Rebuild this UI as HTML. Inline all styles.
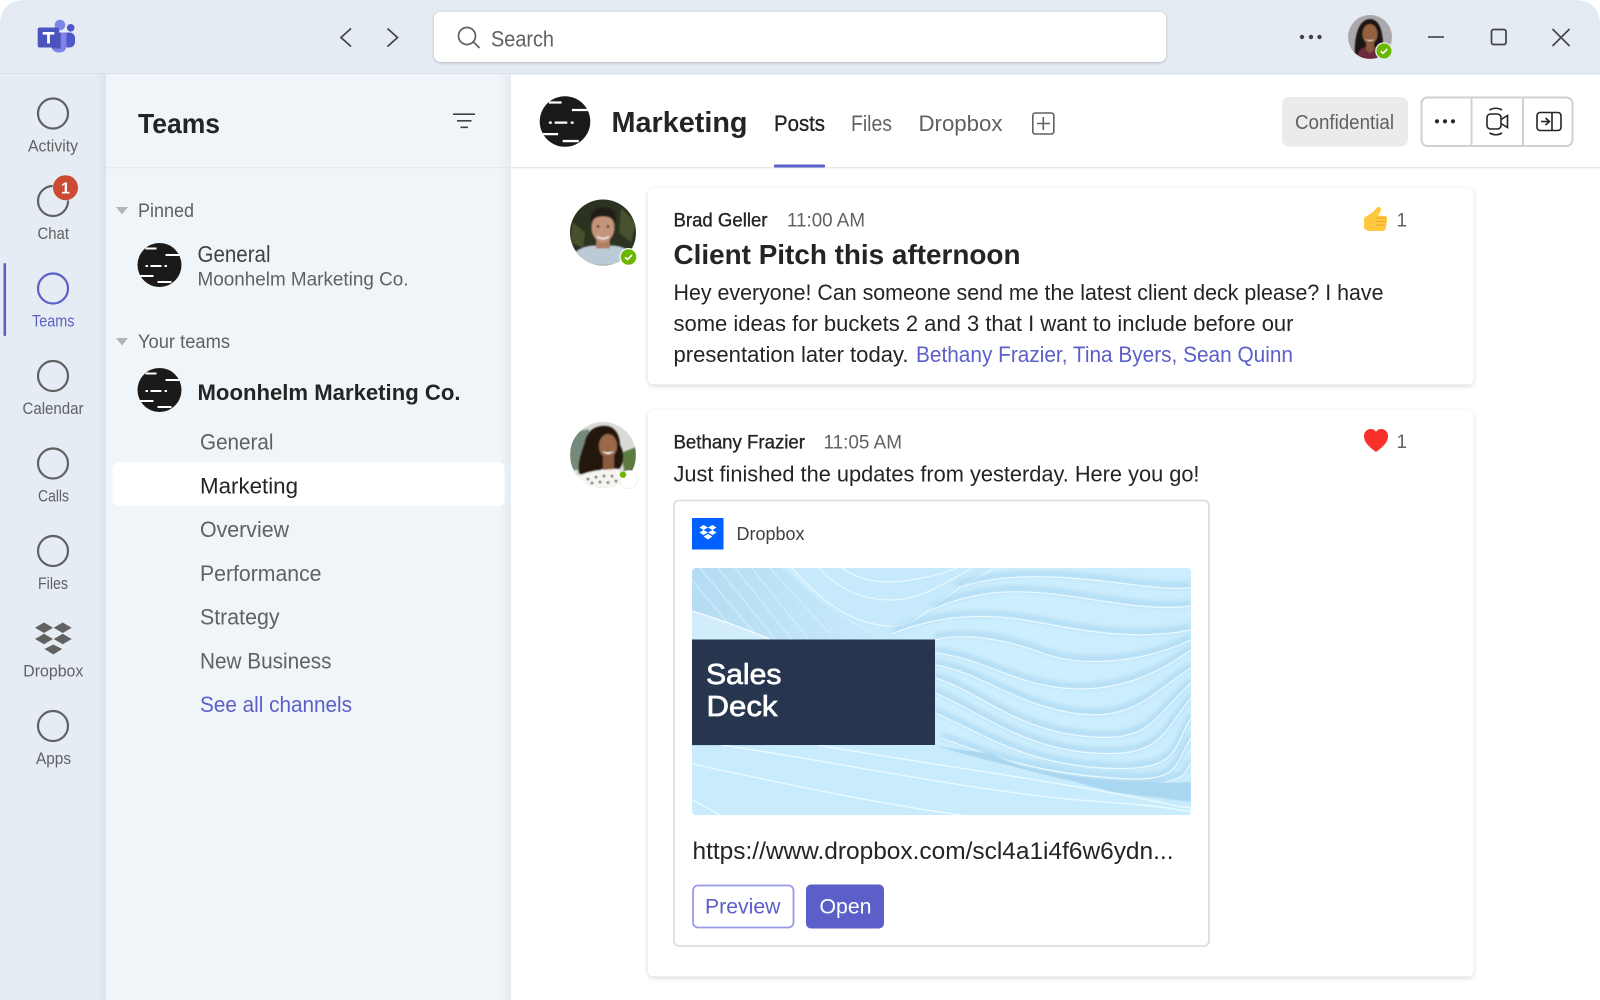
<!DOCTYPE html>
<html lang="en">
<head>
<meta charset="utf-8">
<title>Microsoft Teams - Marketing</title>
<style>
html,body{margin:0;padding:0;width:1600px;height:1000px;overflow:hidden;background:#fff}
svg{display:block}
text{font-family:"Liberation Sans",Arial,sans-serif;white-space:pre}
.r{font-size:16.5px;fill:#616161}
.ch{font-size:22px;fill:#424242}
.sub{font-size:19px;fill:#616161}
.b{font-size:22.5px;fill:#242424}
.m{stroke:#242424;stroke-width:.35px}
</style>
</head>
<body>
<svg width="1600" height="1000" viewBox="0 0 1600 1000" xmlns="http://www.w3.org/2000/svg">
<defs>
<filter id="sh" x="-5%" y="-10%" width="110%" height="120%"><feDropShadow dx="0" dy="1.5" stdDeviation="2.500" flood-color="#000" flood-opacity=".16"/></filter>
<filter id="sh2" x="-5%" y="-10%" width="110%" height="125%"><feDropShadow dx="0" dy="1" stdDeviation="1.500" flood-color="#000" flood-opacity=".22"/></filter>
<filter id="bl"><feGaussianBlur stdDeviation=".8"/></filter>
<filter id="bl2"><feGaussianBlur stdDeviation=".5"/></filter>
<filter id="bl3" x="-10%" y="-10%" width="120%" height="120%"><feGaussianBlur stdDeviation="2.200"/></filter>
<filter id="bl4"><feGaussianBlur stdDeviation=".35"/></filter>
<linearGradient id="railsh" x1="0" x2="1"><stop offset="0" stop-color="#e5ecf4"/><stop offset="1" stop-color="#dce3ea"/></linearGradient>
<linearGradient id="panelsh" x1="0" x2="1"><stop offset="0" stop-color="#f0f5f9"/><stop offset="1" stop-color="#e6ebef"/></linearGradient>
<linearGradient id="wbase" x1="0" y1="0" x2="1" y2="0"><stop offset="0" stop-color="#b5dcf3"/><stop offset=".28" stop-color="#c3e6f9"/><stop offset=".5" stop-color="#cdeefd"/><stop offset="1" stop-color="#cbedfd"/></linearGradient>
<clipPath id="wclip"><rect x="0" y="0" width="499" height="247" rx="4"/></clipPath>
<clipPath id="c22"><circle cx="0" cy="0" r="22"/></clipPath>
<clipPath id="c33"><circle cx="0" cy="0" r="33"/></clipPath>
<g id="team">
<circle cx="0" cy="0" r="22" fill="#1b1a19"/>
<g clip-path="url(#c22)">
<path d="M-14 -16.500H-3M6 -10H23M-23 11H-6M-2 17H12" stroke="#fff" stroke-width="2" fill="none"/>
<path d="M-14 1H-11.500M-9 1H2M5 1H7.500" stroke="#fff" stroke-width="2" fill="none"/>
</g>
</g>
<g id="wlines" fill="none">
<path d="M265 20C310 5 360 8 400 12S470 22 499 20"/>
<path d="M240 42C290 18 340 22 390 30S470 42 499 38"/>
<path d="M200 66C250 45 300 45 350 55S450 72 499 62"/>
<path d="M243 72C270 65 310 70 350 85S450 95 499 72"/>
<path d="M243 85C290 90 320 115 370 120S460 110 499 82"/>
<path d="M243 97C290 105 320 135 380 145S460 125 499 100"/>
<path d="M243 110C290 125 320 160 390 168S460 150 499 115"/>
<path d="M243 125C290 145 330 180 400 185S470 165 499 130"/>
<path d="M243 145C290 165 330 195 410 200S480 180 499 150"/>
<path d="M250 170C300 190 350 205 420 210S480 200 499 170"/>
<path d="M340 205C390 218 440 222 470 215S490 205 499 195"/>
</g>
</defs>

<!-- page -->
<rect width="1600" height="1000" fill="#fff"/>

<!-- title bar -->
<path d="M0 74V26Q0 0 26 0H1574Q1600 0 1600 26V74Z" fill="#e5ebf3"/>
<rect x="0" y="73" width="1600" height="1.500" fill="#d8dfe7"/>

<!-- left rail -->
<rect x="0" y="74" width="106" height="926" fill="#e5ecf4"/>
<rect x="96" y="74" width="10" height="926" fill="url(#railsh)"/>
<rect x="3.500" y="263" width="2.600" height="73" rx="1.300" fill="#5b5fc7"/>

<!-- channel panel -->
<rect x="106" y="74" width="405" height="926" fill="#f0f5f9"/>
<rect x="499" y="74" width="12" height="926" fill="url(#panelsh)"/>
<rect x="106" y="167" width="1494" height="1.300" fill="#e6e8ea"/>

<!-- Teams logo -->
<g filter="url(#bl4)">
<circle cx="70.700" cy="27.800" r="3.800" fill="#5059c9"/>
<rect x="62" y="32.500" width="13" height="15" rx="5.500" fill="#5059c9"/>
<circle cx="60" cy="25" r="5.300" fill="#7b83eb"/>
<path d="M51 32.500H66.500V45Q66.500 52.500 59 52.500Q52 52.500 51 45Z" fill="#7b83eb"/>
<path d="M51 32.500H60.700V48.500H52.500Q51 46 51 45Z" fill="#3f4396" opacity=".75"/>
<rect x="37.700" y="27.500" width="21.500" height="20" rx="2" fill="#4b53bc"/>
<path d="M42.700 32H54.300V34.600H49.900V43.500H47.100V34.600H42.700Z" fill="#fff"/>
</g>

<!-- nav -->
<path d="M351 28.500L341 37.500L351 46.500" fill="none" stroke="#424242" stroke-width="1.700"/>
<path d="M387.500 28.500L397.500 37.500L387.500 46.500" fill="none" stroke="#424242" stroke-width="1.700"/>

<!-- search -->
<rect x="434" y="12" width="732" height="50" rx="7" fill="#fff" filter="url(#sh2)"/>
<circle cx="467" cy="36" r="8.500" fill="none" stroke="#616161" stroke-width="1.700"/>
<path d="M473.500 42L479.500 48" stroke="#616161" stroke-width="1.800"/>
<text x="491" y="46.500" font-size="22.500" fill="#616161" textLength="63" lengthAdjust="spacingAndGlyphs">Search</text>

<!-- title bar right -->
<g fill="#424242"><circle cx="1302" cy="37" r="2.200"/><circle cx="1311" cy="37" r="2.200"/><circle cx="1319.500" cy="37" r="2.200"/></g>
<g transform="translate(1370 37)">
<g clip-path="url(#c22)">
<rect x="-22" y="-22" width="44" height="44" fill="#aaa8ab"/>
<g filter="url(#bl2)">
<path d="M-15 22C-16 5 -14 -17 0 -18C14 -17 13 5 14 22Z" fill="#1b1416"/>
<ellipse cx="0" cy="-3" rx="7.500" ry="10" fill="#93603f"/>
<path d="M-5 2Q0 6 5 2Q0 4.500 -5 2Z" fill="#fff"/>
<path d="M-14 22Q-11 10 -4 10L5 10Q12 11 13 22Z" fill="#6d2a3e"/>
<path d="M-4 5H4V13L0 16L-4 13Z" fill="#8a583b"/>
</g>
</g>
<circle cx="14" cy="14" r="8.800" fill="#e5ebf3"/>
<circle cx="14" cy="14" r="7.500" fill="#6bb700"/>
<path d="M10.800 14.200L13 16.300L17.300 12" fill="none" stroke="#fff" stroke-width="1.600"/>
</g>
<rect x="1428" y="36.200" width="16" height="1.600" fill="#424242"/>
<rect x="1491.500" y="29.500" width="14.500" height="15" rx="2" fill="none" stroke="#424242" stroke-width="1.700"/>
<path d="M1552.500 29L1569.500 46M1569.500 29L1552.500 46" stroke="#424242" stroke-width="1.600"/>

<!-- rail items -->
<g fill="none" stroke="#616161" stroke-width="2.200">
<circle cx="53" cy="113.500" r="15"/>
<circle cx="53" cy="201" r="15"/>
<circle cx="53" cy="288.500" r="15" stroke="#5b5fc7"/>
<circle cx="53" cy="376" r="15"/>
<circle cx="53" cy="463.500" r="15"/>
<circle cx="53" cy="551" r="15"/>
<circle cx="53" cy="726" r="15"/>
</g>
<circle cx="65.500" cy="187.700" r="13" fill="#e5ecf4"/>
<circle cx="65.500" cy="187.700" r="12.500" fill="#cc4a31"/>
<text x="65.500" y="193.500" font-size="16" font-weight="bold" fill="#fff" text-anchor="middle">1</text>
<g fill="#616161">
<path d="M35 627.700L44 622.500L53 627.700L44 633Z"/>
<path d="M53.700 627.700L62.700 622.500L71.700 627.700L62.700 633Z"/>
<path d="M35 639L44 633.800L53 639L44 644.300Z"/>
<path d="M53.700 639L62.700 633.800L71.700 639L62.700 644.300Z"/>
<path d="M44.500 649L53.300 644.500L62.200 649L53.300 654.500Z"/>
</g>
<text class="r" x="28" y="151.500" textLength="50" lengthAdjust="spacingAndGlyphs">Activity</text>
<text class="r" x="37.500" y="239" textLength="31.500" lengthAdjust="spacingAndGlyphs">Chat</text>
<text class="r" x="32" y="326.500" textLength="42.500" lengthAdjust="spacingAndGlyphs" style="fill:#5b5fc7">Teams</text>
<text class="r" x="22.500" y="414" textLength="61" lengthAdjust="spacingAndGlyphs">Calendar</text>
<text class="r" x="38" y="501.500" textLength="31" lengthAdjust="spacingAndGlyphs">Calls</text>
<text class="r" x="38" y="589" textLength="30" lengthAdjust="spacingAndGlyphs">Files</text>
<text class="r" x="23.300" y="676.500" textLength="60" lengthAdjust="spacingAndGlyphs">Dropbox</text>
<text class="r" x="36" y="764" textLength="35" lengthAdjust="spacingAndGlyphs">Apps</text>

<!-- panel header -->
<text x="138" y="133" font-size="28" font-weight="bold" fill="#242424" textLength="82" lengthAdjust="spacingAndGlyphs">Teams</text>
<path d="M453 114.200H475M457 120.800H471.500M460.500 127.300H468" stroke="#424242" stroke-width="1.700" fill="none"/>

<!-- pinned -->
<path d="M116 207H128L122 214.500Z" fill="#b3b3b3"/>
<text x="138" y="217" font-size="19" fill="#616161" textLength="56" lengthAdjust="spacingAndGlyphs">Pinned</text>
<use href="#team" transform="translate(159.500 265)"/>
<text x="197.500" y="262" font-size="23" fill="#424242" textLength="73" lengthAdjust="spacingAndGlyphs">General</text>
<text class="sub" x="197.500" y="285.500" textLength="211" lengthAdjust="spacingAndGlyphs">Moonhelm Marketing Co.</text>

<!-- your teams -->
<path d="M116 338H128L122 345.500Z" fill="#b3b3b3"/>
<text x="138" y="348" font-size="19" fill="#616161" textLength="92" lengthAdjust="spacingAndGlyphs">Your teams</text>
<use href="#team" transform="translate(159.500 390)"/>
<text x="197.500" y="400" font-size="22.500" font-weight="bold" fill="#242424" textLength="263" lengthAdjust="spacingAndGlyphs">Moonhelm Marketing Co.</text>
<rect x="112.500" y="462.500" width="392" height="43.500" rx="6" fill="#fff"/>
<text class="ch" x="200" y="449.500" style="fill:#616161" textLength="73.500" lengthAdjust="spacingAndGlyphs">General</text>
<text class="ch" x="200" y="493.500" textLength="98" lengthAdjust="spacingAndGlyphs" style="fill:#242424">Marketing</text>
<text class="ch" x="200" y="537" style="fill:#616161" textLength="89" lengthAdjust="spacingAndGlyphs">Overview</text>
<text class="ch" x="200" y="581" style="fill:#616161" textLength="121.500" lengthAdjust="spacingAndGlyphs">Performance</text>
<text class="ch" x="200" y="624.500" style="fill:#616161" textLength="79.500" lengthAdjust="spacingAndGlyphs">Strategy</text>
<text class="ch" x="200" y="668.500" style="fill:#616161" textLength="131.500" lengthAdjust="spacingAndGlyphs">New Business</text>
<text class="ch" x="200" y="712" style="fill:#5b5fc7" textLength="152" lengthAdjust="spacingAndGlyphs">See all channels</text>

<!-- main header -->
<use href="#team" transform="translate(565 121.500) scale(1.150)"/>
<text x="611.500" y="132" font-size="29" font-weight="bold" fill="#242424" textLength="136" lengthAdjust="spacingAndGlyphs">Marketing</text>
<text class="m" x="774" y="131" font-size="22" fill="#242424" textLength="51" lengthAdjust="spacingAndGlyphs">Posts</text>
<text x="851" y="131" font-size="22" fill="#616161" textLength="41" lengthAdjust="spacingAndGlyphs">Files</text>
<text x="918.500" y="131" font-size="22" fill="#616161" textLength="84" lengthAdjust="spacingAndGlyphs">Dropbox</text>
<rect x="1032.800" y="113" width="21" height="21" rx="2.500" fill="none" stroke="#616161" stroke-width="1.600"/>
<path d="M1043.300 117V130M1037 123.500H1050" stroke="#616161" stroke-width="1.600"/>
<rect x="774" y="164.500" width="51" height="3" rx="1" fill="#5b5fc7"/>

<rect x="1282" y="97" width="126" height="49.500" rx="7" fill="#ebebeb"/>
<text x="1295" y="129" font-size="20" fill="#616161" textLength="99" lengthAdjust="spacingAndGlyphs">Confidential</text>

<rect x="1421.500" y="97.500" width="151" height="48.500" rx="6" fill="#fff" stroke="#d1d1d1" stroke-width="2"/>
<path d="M1471.500 98V146M1523 98V146" stroke="#d1d1d1" stroke-width="2"/>
<g fill="#242424"><circle cx="1437" cy="121.300" r="2.100"/><circle cx="1445" cy="121.300" r="2.100"/><circle cx="1453" cy="121.300" r="2.100"/></g>
<g fill="none" stroke="#242424" stroke-width="1.600">
<rect x="1487" y="114" width="14" height="15" rx="3.500"/>
<path d="M1501 119.500L1507.500 115.500V127.500L1501 123.500"/>
<path d="M1489.500 110Q1496 106.500 1502 110M1489.500 133Q1496 136.500 1502 133"/>
<rect x="1537" y="112.500" width="24" height="18" rx="3"/>
<path d="M1552 112.500V130.500M1541 121.500H1549M1545.500 118L1549.500 121.500L1545.500 125"/>
</g>

<!-- card 1 -->
<rect x="648" y="188" width="825.500" height="196.500" rx="6" fill="#fff" filter="url(#sh)"/>
<g transform="translate(603 232.500)">
<g clip-path="url(#c33)">
<rect x="-33" y="-33" width="66" height="66" fill="#2b3220"/>
<g filter="url(#bl)">
<path d="M18 -25L33 -10L28 10L16 0ZM-30 -10L-18 0L-20 15L-33 10Z" fill="#46512f"/>
<path d="M-33 33V24Q-22 13 -9 13H9Q22 13 33 24V33Z" fill="#bccad6"/>
<rect x="-7" y="2" width="14" height="14" fill="#b07f62"/>
<ellipse cx="0" cy="-5" rx="11.500" ry="15" fill="#c3937a"/>
<path d="M-12 -7C-14 -22 -7 -25 1 -25C10 -25 15 -20 12 -7C10 -14 7 -16 0 -16C-7 -16 -10 -14 -12 -7Z" fill="#211a17"/>
<path d="M-6 4Q0 8 6 4" stroke="#fff" stroke-width="1.300" fill="none"/>
<circle cx="-5" cy="-6" r="1.300" fill="#2a1d18"/><circle cx="5" cy="-6" r="1.300" fill="#2a1d18"/>
</g>
</g>
<circle cx="25.500" cy="24.500" r="9" fill="#fff"/>
<circle cx="25.500" cy="24.500" r="7.800" fill="#6bb700"/>
<path d="M22 24.800L24.500 27L29 22.500" fill="none" stroke="#fff" stroke-width="1.600"/>
</g>
<text class="m" x="673.500" y="226.500" font-size="19" fill="#242424" textLength="94" lengthAdjust="spacingAndGlyphs">Brad Geller</text>
<text x="787" y="226.500" font-size="19" fill="#616161" textLength="78" lengthAdjust="spacingAndGlyphs">11:00 AM</text>
<text x="673.500" y="264" font-size="27.500" font-weight="bold" fill="#242424" textLength="347" lengthAdjust="spacingAndGlyphs">Client Pitch this afternoon</text>
<text class="b" x="673.500" y="300" textLength="710" lengthAdjust="spacingAndGlyphs">Hey everyone! Can someone send me the latest client deck please? I have</text>
<text class="b" x="673.500" y="331" textLength="620" lengthAdjust="spacingAndGlyphs">some ideas for buckets 2 and 3 that I want to include before our</text>
<text class="b" x="673.500" y="362" textLength="235" lengthAdjust="spacingAndGlyphs">presentation later today.</text>
<text class="b" x="916" y="362" style="fill:#5b5fc7" textLength="377" lengthAdjust="spacingAndGlyphs">Bethany Frazier, Tina Byers, Sean Quinn</text>
<!-- thumb -->
<path d="M1364 219Q1364 217 1367 216L1373 212L1377 207.500Q1380 206 1381 209Q1381 212 1378 215.500L1385 216Q1388 217 1387 220L1386 228Q1385 231 1382 231H1370Q1366 231 1364 228Z" fill="#ffc83d"/>
<path d="M1376 218H1386M1376 221.500H1386M1376 225H1385" stroke="#e3a92e" stroke-width="1" fill="none"/>
<text x="1396.500" y="226.500" font-size="19" fill="#616161">1</text>

<!-- card 2 -->
<rect x="648" y="410" width="825.500" height="566.500" rx="6" fill="#fff" filter="url(#sh)"/>
<g transform="translate(603 455)">
<g clip-path="url(#c33)">
<rect x="-33" y="-33" width="66" height="66" fill="#d9dcd6"/>
<g filter="url(#bl)">
<path d="M-33 -22L-14 -26L-16 15H-33Z" fill="#77897a"/>
<path d="M18 -2L33 -8V20H22Z" fill="#5d7a42"/>
<path d="M-24 18C-26 5 -20 -6 -18 -14C-15 -26 -6 -30 4 -29C12 -28 17 -20 17 -10C21 -4 22 8 16 14C6 14 0 10 -4 18C-10 22 -20 22 -24 18Z" fill="#22150f"/>
<ellipse cx="5" cy="-9" rx="9" ry="12" fill="#9a6748"/>
<path d="M0 0H11V15H0Z" fill="#8a5a3e"/>
<path d="M-27 33V22Q-14 16 -2 15L13 14Q22 17 30 28V33Z" fill="#f7f5f1"/>
<path d="M-1 -4Q5 2 11 -4Q5 -1 -1 -4Z" fill="#fff"/>
<g fill="#1d1a1a"><circle cx="-15" cy="24" r="1.300"/><circle cx="-7" cy="22" r="1.300"/><circle cx="1" cy="21" r="1.300"/><circle cx="9" cy="21" r="1.300"/><circle cx="-3" cy="27" r="1.300"/><circle cx="5" cy="27.500" r="1.300"/><circle cx="-11" cy="28" r="1.300"/><circle cx="13" cy="26" r="1.300"/></g>
</g>
</g>
<circle cx="26" cy="24.500" r="9" fill="#fff" stroke="#eeeeee" stroke-width=".8"/>
<circle cx="20" cy="19.700" r="3.200" fill="#6bb700"/>
</g>
<text class="m" x="673.500" y="448.500" font-size="19" fill="#242424" textLength="131.500" lengthAdjust="spacingAndGlyphs">Bethany Frazier</text>
<text x="823.500" y="448.500" font-size="19" fill="#616161" textLength="78.500" lengthAdjust="spacingAndGlyphs">11:05 AM</text>
<text class="b" x="673.500" y="481.500" textLength="526" lengthAdjust="spacingAndGlyphs">Just finished the updates from yesterday. Here you go!</text>
<path d="M1376 452C1368 446 1364 442 1364 436C1364 431 1368 429 1371 429C1373 429 1375 430 1376 432C1377 430 1379 429 1381 429C1384 429 1388 431 1388 436C1388 442 1384 446 1376 452Z" fill="#f7312a"/>
<text x="1396.500" y="448" font-size="19" fill="#616161">1</text>

<!-- inner card -->
<rect x="674" y="500.500" width="535" height="445.500" rx="5" fill="#fff" stroke="#dedede" stroke-width="1.800"/>
<rect x="692" y="518" width="31.500" height="31.500" fill="#0061fe"/>
<g fill="#fff">
<path d="M699.500 527.500L703.500 525L708 527.500L703.500 530Z"/>
<path d="M708 527.500L712.500 525L716.500 527.500L712.500 530Z"/>
<path d="M699.500 532.500L703.500 530L708 532.500L703.500 535Z"/>
<path d="M708 532.500L712.500 530L716.500 532.500L712.500 535Z"/>
<path d="M703.500 536.500L708 534L712.500 536.500L708 539.500Z"/>
</g>
<text x="736.500" y="540" font-size="18" fill="#424242" textLength="68" lengthAdjust="spacingAndGlyphs">Dropbox</text>

<!-- sales image -->
<svg x="692" y="568" width="499" height="247" viewBox="0 0 499 247">
<g clip-path="url(#wclip)">
<rect width="499" height="247" fill="url(#wbase)"/>
<!-- valley top -->
<path d="M90 0C130 35 160 55 195 60S250 30 300 0Z" fill="#c6e9fb"/>
<g fill="none" stroke="#e9f9ff" stroke-width="1.200" filter="url(#bl4)">
<path d="M150 0C165 10 180 14 195 14S240 10 265 0"/>
<path d="M127 0C150 25 175 32 200 32S245 20 280 0"/>
<path d="M100 0C130 35 160 55 195 58S240 30 300 2"/>
</g>
<!-- diagonal lines -->
<g fill="none" stroke="#d7f1fd" stroke-width="1" opacity=".9">
<path d="M-10 0L50 72"/><path d="M8 0L68 72"/><path d="M26 0L84 72"/><path d="M43 0L100 72"/><path d="M60 0L117 72"/><path d="M78 0L140 68"/><path d="M97 0C125 35 160 55 190 70"/>
</g>
<!-- left ribbon -->
<path d="M0 43C30 52 55 62 78 71L0 72Z" fill="#d2edfb"/>
<path d="M0 43C30 52 55 62 78 71" fill="none" stroke="#f2fbff" stroke-width="1.300"/>
<!-- right waves -->
<use href="#wlines" stroke="#a6d4ef" stroke-width="6" opacity=".65" filter="url(#bl3)" y="-3"/>
<use href="#wlines" stroke="#eafaff" stroke-width="1.200" filter="url(#bl4)"/>
<!-- wedge -->
<path d="M243 178C300 195 350 205 420 224L499 234V214C450 216 350 212 300 186Z" fill="#a9d6f0" filter="url(#bl)"/>
<!-- bottom swooshes -->
<path d="M0 178H243C300 195 350 205 420 224L499 236V247H0Z" fill="#c9ecfc"/>
<g fill="none" stroke="#ecfaff" stroke-width="1.300" filter="url(#bl4)">
<path d="M0 196C90 215 180 235 270 247"/>
<path d="M30 177C150 195 290 225 400 233S470 242 499 243"/>
<path d="M125 177C230 195 340 210 420 225S480 238 499 240"/>
<path d="M0 232C10 236 20 243 28 247"/>
</g>
<rect x="0" y="71.500" width="243" height="105.500" fill="#28354f"/>
</g>
</svg>
<text x="706" y="684" font-size="29" fill="#fff" stroke="#fff" stroke-width=".7" textLength="75.500" lengthAdjust="spacingAndGlyphs">Sales</text>
<text x="706.500" y="716" font-size="29" fill="#fff" stroke="#fff" stroke-width=".7" textLength="71" lengthAdjust="spacingAndGlyphs">Deck</text>

<text x="692.500" y="859" font-size="24" fill="#242424" textLength="481" lengthAdjust="spacingAndGlyphs">https://www.dropbox.com/scl4a1i4f6w6ydn...</text>

<rect x="693" y="885.500" width="100.500" height="42" rx="5" fill="#fff" stroke="#999be9" stroke-width="1.800"/>
<text x="705" y="913.500" font-size="21.500" fill="#5b5fc7" textLength="75.500" lengthAdjust="spacingAndGlyphs">Preview</text>
<rect x="806" y="884.500" width="78" height="44" rx="5" fill="#5b5fc7"/>
<text x="819.500" y="913.500" font-size="21.500" fill="#fff" textLength="52" lengthAdjust="spacingAndGlyphs">Open</text>
</svg>
</body>
</html>
